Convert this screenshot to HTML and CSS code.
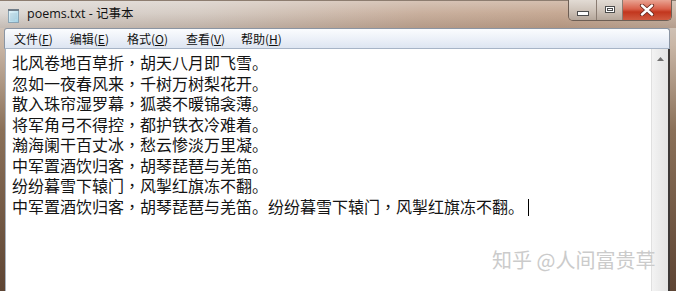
FILE: index.html
```html
<!DOCTYPE html>
<html lang="zh-CN">
<head>
<meta charset="utf-8">
<title>poems.txt - 记事本</title>
<link rel="stylesheet" href="styles.css">
</head>
<body>
<div class="window">
  <div class="titlebar">
    <svg class="app-icon" width="13" height="15" viewBox="0 0 13 15">
      <defs>
        <linearGradient id="pg" x1="0" y1="0" x2="1" y2="1">
          <stop offset="0" stop-color="#e8f6fb"/>
          <stop offset="1" stop-color="#9fd0e4"/>
        </linearGradient>
      </defs>
      <rect x="1.5" y="2.5" width="10" height="12" fill="url(#pg)" stroke="#8aa4b4"/>
      <rect x="1" y="1" width="11" height="2" fill="#6f7c88"/>
      <path d="M3 6h7M3 8h7M3 10h7M3 12h5" stroke="#a9c6d6" stroke-width="0.8"/>
    </svg>
    <span class="title">poems.txt - 记事本</span>
    <div class="controls">
      <div class="btn min"><span class="min-glyph"></span></div>
      <div class="btn max"><span class="max-glyph"></span></div>
      <div class="btn close">
        <svg width="16" height="12" viewBox="0 0 16 12">
          <path d="M3 1.5 L13 10.5 M13 1.5 L3 10.5" stroke="#6a2a20" stroke-width="4.2" stroke-linecap="round"/>
          <path d="M3 1.5 L13 10.5 M13 1.5 L3 10.5" stroke="#ffffff" stroke-width="2.4" stroke-linecap="round"/>
        </svg>
      </div>
    </div>
  </div>
  <div class="menubar">
    <span class="menu">文件(<u>F</u>)</span>
    <span class="menu">编辑(<u>E</u>)</span>
    <span class="menu">格式(<u>O</u>)</span>
    <span class="menu">查看(<u>V</u>)</span>
    <span class="menu">帮助(<u>H</u>)</span>
  </div>
  <div class="client">
    <div class="editor">
      <div class="line">北风卷地百草折<span class="cm" lang="zh-TW">，</span>胡天八月即飞雪。</div>
      <div class="line">忽如一夜春风来<span class="cm" lang="zh-TW">，</span>千树万树梨花开。</div>
      <div class="line">散入珠帘湿罗幕<span class="cm" lang="zh-TW">，</span>狐裘不暖锦衾薄。</div>
      <div class="line">将军角弓不得控<span class="cm" lang="zh-TW">，</span>都护铁衣冷难着。</div>
      <div class="line">瀚海阑干百丈冰<span class="cm" lang="zh-TW">，</span>愁云惨淡万里凝。</div>
      <div class="line">中军置酒饮归客<span class="cm" lang="zh-TW">，</span>胡琴琵琶与羌笛。</div>
      <div class="line">纷纷暮雪下辕门<span class="cm" lang="zh-TW">，</span>风掣红旗冻不翻。</div>
      <div class="line">中军置酒饮归客<span class="cm" lang="zh-TW">，</span>胡琴琵琶与羌笛。纷纷暮雪下辕门<span class="cm" lang="zh-TW">，</span>风掣红旗冻不翻。<span class="caret"></span></div>
    </div>
    <div class="scrollbar">
      <svg class="arrow" width="7" height="4" viewBox="0 0 7 4"><path d="M0 4 L3.5 0 L7 4 Z" fill="#707070"/></svg>
    </div>
    <div class="watermark">知乎 @人间富贵草</div>
  </div>
</div>
</body>
</html>
```

FILE: styles.css
```css
html, body {
  margin: 0;
  padding: 0;
}
body {
  width: 676px;
  height: 291px;
  overflow: hidden;
  font-family: "Noto Sans CJK SC", "Noto Sans", sans-serif;
}
.window {
  width: 676px;
  height: 291px;
  display: flex;
  flex-direction: column;
  background: linear-gradient(180deg, #d9d2cb 0px, #c9b6a6 45px, #8a7058 130px, #5e4534 291px);
}
.titlebar {
  height: 28px;
  flex: none;
  display: flex;
  align-items: flex-start;
  background:
    linear-gradient(180deg, rgba(255,255,255,0.25) 0px, rgba(255,255,255,0) 12px, rgba(90,60,40,0.2) 28px),
    linear-gradient(90deg, #dcd8d4 0px, #d6ccc4 200px, #c9b09e 420px, #c6a994 560px, #c9b4a4 676px);
  border-top: 1px solid #8d7d70;
  box-sizing: border-box;
}
.app-icon {
  margin: 7px 0 0 7px;
  flex: none;
}
.title {
  margin: 5px 0 0 7px;
  font-family: "Open Sans", "Noto Sans CJK SC", sans-serif;
  font-size: 12.5px;
  line-height: 16px;
  color: #111;
}
.controls {
  margin-left: auto;
  margin-right: 4px;
  margin-top: -1px;
  display: flex;
  height: 20px;
  border: 1px solid #6d5e54;
  border-top: none;
  border-radius: 0 0 5px 5px;
  overflow: hidden;
}
.btn {
  height: 20px;
  display: flex;
  align-items: center;
  justify-content: center;
  box-sizing: border-box;
}
.btn.min {
  width: 28px;
  background: linear-gradient(180deg, #e2dbd4 0%, #cfc4ba 50%, #b5a79b 100%);
  border-right: 1px solid #8a7c72;
}
.btn.max {
  width: 26px;
  background: linear-gradient(180deg, #e2dbd4 0%, #cfc4ba 50%, #b5a79b 100%);
  border-right: 1px solid #8a7c72;
}
.btn.close {
  width: 48px;
  background: linear-gradient(180deg, #e9a392 0%, #d9604a 45%, #c2361e 60%, #d05a40 100%);
}
.min-glyph {
  width: 10px;
  height: 3px;
  margin-top: 7px;
  background: #fff;
  border: 1px solid #4c4c4c;
}
.max-glyph {
  width: 8px;
  height: 5px;
  border: 1px solid #4c4c4c;
  box-shadow: inset 0 0 0 1px #fff, inset 0 0 0 2px #4c4c4c;
  background: #fff;
  margin-top: -1px;
}
.menubar {
  flex: none;
  height: 21px;
  margin: 0 6px 0 4px;
  display: flex;
  align-items: center;
  gap: 14px;
  padding-left: 8px;
  box-sizing: border-box;
  background: linear-gradient(180deg, #fbfcfe 0%, #eef2f9 45%, #dde5f1 100%);
  border: 1px solid #8b95a3;
  border-bottom-color: #a7b4c6;
  border-radius: 3px 3px 0 0;
  font-size: 12px;
  color: #111;
}
.menu {
  line-height: 16px;
  padding: 0 1px;
}
.menu:nth-child(2) { margin-left: 1px; }
.menu:nth-child(3) { margin-left: 2px; }
.menu:nth-child(4) { margin-left: 2px; }
.menu u {
  text-underline-offset: 1px;
}
.client {
  flex: 1;
  display: flex;
  position: relative;
  margin: 0 6px 0 5px;
  background: #fff;
  border-left: 1px solid #a9b3c0;
  border-right: 2px solid #3c3836;
  min-height: 0;
}
.editor {
  flex: 1;
  padding: 3px 0 0 6px;
  font-size: 16px;
  line-height: 20.5px;
  color: #141414;
}
.line {
  white-space: nowrap;
  height: 20.5px;
}
.cm {
  font-family: "Noto Sans CJK TC", "Noto Sans CJK SC", sans-serif;
}
.caret {
  display: inline-block;
  width: 1px;
  height: 17px;
  background: #000;
  margin-left: 4px;
  vertical-align: -3px;
}
.scrollbar {
  width: 16px;
  flex: none;
  background: linear-gradient(90deg, #f3f3f3 0%, #e9e9e9 60%, #e4e4e4 100%);
  border-left: 1px solid #e0e0e0;
  display: flex;
  justify-content: center;
}
.arrow {
  margin-top: 8px;
}
.watermark {
  position: absolute;
  left: 486px;
  top: 198px;
  font-size: 20px;
  line-height: 26px;
  color: #cbcbcb;
  white-space: nowrap;
}
```
